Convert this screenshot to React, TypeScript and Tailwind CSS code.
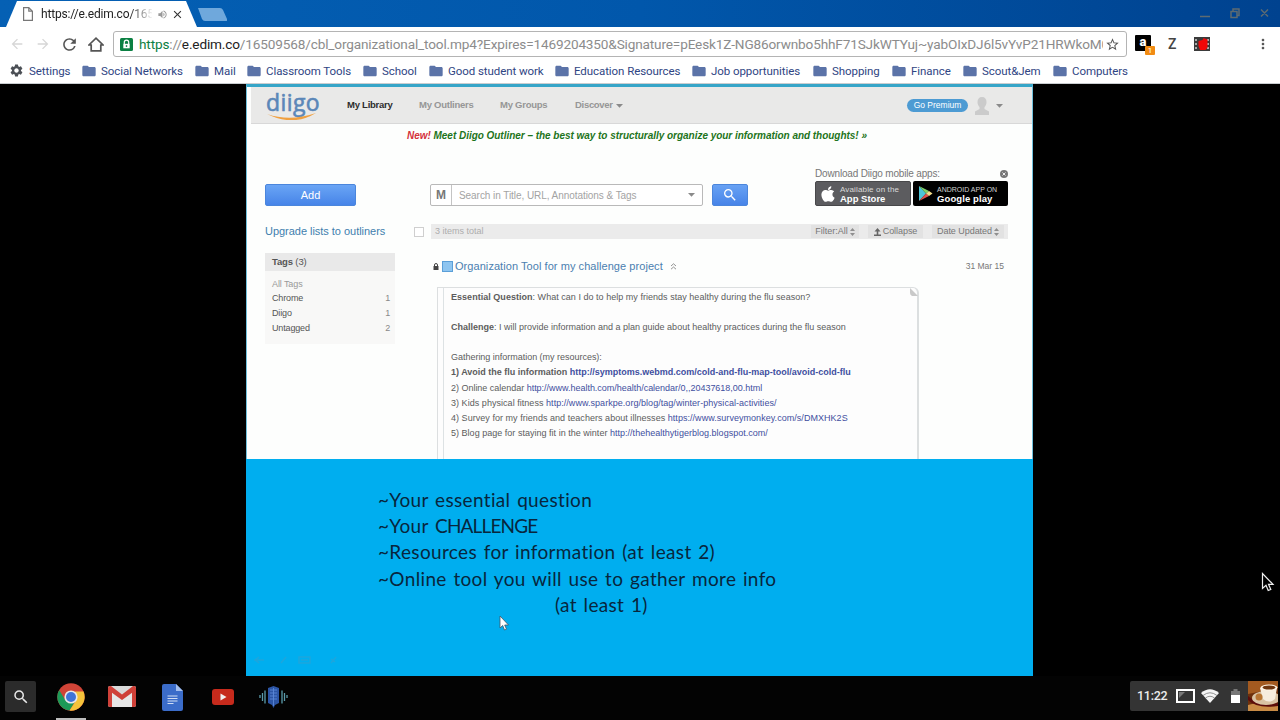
import type { ReactNode } from "react";
import {
  MdArrowBack,
  MdArrowForward,
  MdRefresh,
  MdFolder,
  MdSettings,
  MdStarBorder,
  MdMoreVert,
  MdSearch,
  MdVolumeUp,
  MdClose,
} from "react-icons/md";
import { FaApple } from "react-icons/fa";

const bookmarks = [
  { label: "Social Networks", width: "w-[113px]" },
  { label: "Mail", width: "w-[52px]" },
  { label: "Classroom Tools", width: "w-[116px]" },
  { label: "School", width: "w-[66px]" },
  { label: "Good student work", width: "w-[126px]" },
  { label: "Education Resources", width: "w-[137px]" },
  { label: "Job opportunities", width: "w-[121px]" },
  { label: "Shopping", width: "w-[79px]" },
  { label: "Finance", width: "w-[71px]" },
  { label: "Scout&Jem", width: "w-[90px]" },
  { label: "Computers", width: "w-[80px]" },
];

function TitleBar() {
  return (
    <div className="flex h-[27px] bg-linear-to-r from-[#0560b4] via-[#0157ab] to-[#00428f]">
      <div className="ml-[6px] mt-px flex h-[26px] w-[191px] items-center bg-white pl-[17px] [clip-path:polygon(11px_0,180px_0,191px_100%,0_100%)]">
        <svg width="10" height="14" viewBox="0 0 10 14" fill="none" stroke="#777" strokeWidth="1.2">
          <path d="M.6.6h5.200L9.400 4.200v9.200H.6zM5.800.6v3.600h3.600" />
        </svg>
        <span className="ml-2 w-[111px] overflow-hidden text-[12px] tracking-[-0.17px] text-[#222] [mask-image:linear-gradient(to_right,black_80%,transparent_101%)]">
          https://e.edim.co/165
        </span>
        <MdVolumeUp className="ml-[5px] size-[11px] text-[#999]" />
        <MdClose className="ml-[3px] size-[13px] text-[#333]" />
      </div>
      <svg className="mt-2" width="30" height="14" viewBox="0 0 30 14">
        <path d="M1 0h22q2 0 3 2l4 9q1 2-1 2H8q-2 0-3-2z" fill="#6fa8dc" />
      </svg>
      <svg className="ml-auto mr-[10px] mt-[7px]" width="70" height="13" viewBox="0 0 70 13" fill="none" stroke="#5d6b72" strokeWidth="1.5">
        <path d="M0 9.500h10M31 4.500h6v6h-6zM33 4V2h6v6.500h-2M61 2.500l7 7M68 2.500l-7 7" />
      </svg>
    </div>
  );
}

function Toolbar() {
  return (
    <div className="flex h-[33px] items-center bg-white pt-px">
      <MdArrowBack className="ml-[9px] size-4 text-[#d6d6d6]" />
      <MdArrowForward className="ml-[10px] size-4 text-[#d6d6d6]" />
      <MdRefresh className="ml-[9px] size-[19px] text-[#555]" />
      <svg className="ml-[9px]" width="16" height="15" viewBox="0 0 16 15" fill="none" stroke="#555" strokeWidth="1.7">
        <path d="M.9 8 8 1.200 15.100 8H12.800v5.800H3.200V8z" />
      </svg>
      <div className="ml-[9px] flex h-[26px] w-[1014px] items-center rounded-[3px] border border-[#b4b4b4]">
        <svg className="ml-[6px] shrink-0" width="13" height="13" viewBox="0 0 13 13">
          <rect width="13" height="13" rx="1.500" fill="#0b8043" />
          <path d="M4.300 6V4.300a2.200 2.200 0 0 1 4.400 0V6" fill="none" stroke="#fff" strokeWidth="1.200" />
          <path d="M3.300 5.800h6.400v4.500H3.300z" fill="#fff" />
          <path d="M5.800 7.200h1.400v1.700H5.800z" fill="#0b8043" />
        </svg>
        <div className="ml-[6px] w-[964px] overflow-hidden whitespace-nowrap text-[13.6px] leading-[20px] tracking-[-0.15px] text-[#8c8c8c]">
          <span className="text-[#0b8043]">https</span>://<span className="text-[#222]">e.edim.co</span>
          /16509568/cbl_organizational_tool.mp4?Expires=1469204350&amp;Signature=pEesk1Z-NG86orwnbo5hhF71SJkWTYuj~yabOIxDJ6l5vYvP21HRWkoM0
        </div>
        <MdStarBorder className="ml-[2px] size-[15px] shrink-0 text-[#555]" />
      </div>
      <div className="relative ml-[8px] mb-[2px] flex size-[16px] justify-center rounded-[1px] bg-black text-[13px] font-black leading-[14px] text-white">
        a
        <span className="absolute left-[10px] top-[11px] flex h-[9px] w-[10px] items-center justify-center rounded-[1px] bg-[#f28c13] text-[8px] font-normal leading-none text-white">
          1
        </span>
      </div>
      <span className="ml-[17px] w-[10px] text-[14px] font-medium text-[#444]">Z</span>
      <svg className="ml-[16px]" width="16" height="16" viewBox="0 0 16 16">
        <path d="M0 1h16v14H0z" fill="#3b3b3b" />
        <path d="M1 3h2v2H1zM1 7h2v2H1zM1 11h2v2H1zM13 3h2v2h-2zM13 7h2v2h-2zM13 11h2v2h-2z" fill="#aaa" />
        <path d="M4.500 5l4-1 1-2 4 1.500v8l-2 2.500H6l-1.500-4z" fill="#f00808" />
      </svg>
      <MdMoreVert className="ml-[45px] size-4 text-[#555]" />
    </div>
  );
}

function Bookmarks() {
  return (
    <div className="flex h-[23px] items-center bg-white pb-px pl-[9px] text-[11.5px] leading-[16px] tracking-[-0.07px] text-[#2f4583]">
      <MdSettings className="mb-px size-[15px] shrink-0 text-[#4c5056]" />
      <span className="ml-[5px] w-[52px]">Settings</span>
      {bookmarks.map((b) => (
        <div key={b.label} className={`flex shrink-0 items-center whitespace-nowrap ${b.width}`}>
          <MdFolder className="mb-px mr-[4px] size-4 shrink-0 text-[#5b73a8]" />
          {b.label}
        </div>
      ))}
    </div>
  );
}

function Caret({ className }: { className: string }) {
  return (
    <svg className={className} width="7" height="4" viewBox="0 0 7 4">
      <path d="M0 0h7L3.500 3.800z" fill="#8a8a8a" />
    </svg>
  );
}

function Sorter() {
  return (
    <svg width="5" height="8" viewBox="0 0 5 8" className="ml-[2px]">
      <path d="M0 3 2.500 0 5 3zM0 5h5L2.500 8z" fill="#8f8f8f" />
    </svg>
  );
}

function DiigoNav() {
  return (
    <div className="ml-[4px] flex h-[37px] items-center border-b border-[#d8d8d8] bg-[#e9e9e8] pt-px text-[9.5px] font-bold text-[#969696]">
      <div className="ml-[15px] h-[30px] w-[54px]">
        <div className="h-[23px] font-['Open_Sans'] text-[23px] font-normal leading-[23px] tracking-[0.4px] text-[#5b87b8] [-webkit-text-stroke:0.6px_#5b87b8]">diigo</div>
        <svg width="52" height="7" viewBox="0 0 52 7" className="-mt-px">
          <path d="M1 1Q24 9 50 0Q27 14 1 1z" fill="#f0a040" />
        </svg>
      </div>
      <span className="ml-[27px] w-[72px] tracking-[-0.25px] text-[#2d2d2d]">My Library</span>
      <span className="w-[81px] tracking-[-0.25px]">My Outliners</span>
      <span className="w-[75px] tracking-[-0.25px]">My Groups</span>
      <span className="w-[41px] tracking-[-0.3px]">Discover</span>
      <Caret className="" />
      <span className="ml-[284px] flex h-[13px] w-[61px] items-center justify-center rounded-full bg-[#4d9bd3] text-[8.5px] font-normal text-white">
        Go Premium
      </span>
      <svg className="ml-[6px]" width="16" height="20" viewBox="0 0 16 20" fill="#cbcbcb">
        <path d="M8 1c3 0 4.500 2 4.500 5 0 2.500-1 4-2 5v2l4.500 2.500V19H1v-3.500L5.500 13v-2c-1-1-2-2.500-2-5C3.500 3 5 1 8 1z" />
      </svg>
      <Caret className="ml-[6px]" />
    </div>
  );
}

function SearchRow() {
  return (
    <div className="flex h-[39px] items-end pl-[18px]">
      <div className="flex h-[22px] w-[91px] items-center justify-center rounded-[2px] border border-[#4b86dc] bg-linear-to-b from-[#6aa5f5] to-[#4784e8] text-[11px] text-white">
        Add
      </div>
      <div className="ml-[74px] flex h-[22px] w-[273px] items-center rounded-[2px] border border-[#b9b9b9] bg-white">
        <span className="flex h-full w-[21px] items-center justify-center border-r border-[#c4c4c4] text-[12px] font-bold text-[#777]">M</span>
        <span className="ml-[7px] w-[229px] text-[10px] tracking-[-0.06px] text-[#a3a3a3]">Search in Title, URL, Annotations &amp; Tags</span>
        <Caret className="" />
      </div>
      <div className="ml-[9px] flex h-[22px] w-[36px] items-center justify-center rounded-[2px] border border-[#4b86dc] bg-linear-to-b from-[#68a2f4] to-[#4784e8]">
        <MdSearch className="size-[16px] text-white" />
      </div>
      <div className="ml-[67px] w-[193px]">
        <div className="mb-px flex h-[12px] items-center justify-between text-[10px] leading-[12px] tracking-[-0.17px] text-[#777]">
          Download Diigo mobile apps:
          <svg width="8" height="8" viewBox="0 0 8 8">
            <circle cx="4" cy="4" r="4" fill="#777" />
            <path d="M2.500 2.500l3 3M5.500 2.500l-3 3" stroke="#eee" />
          </svg>
        </div>
        <div className="flex gap-[2px] text-white">
          <div className="flex h-[25px] w-[96px] items-center rounded-[2px] border border-[#48484a] bg-[#5c5c5f] pl-[3px]">
            <FaApple className="size-[18px]" />
            <div className="ml-[3px] leading-[9px]">
              <div className="text-[8px] tracking-[0.15px] text-[#d9d9d9]">Available on the</div>
              <div className="text-[9.5px] font-bold">App Store</div>
            </div>
          </div>
          <div className="flex h-[25px] w-[95px] items-center rounded-[2px] bg-black pl-[5px]">
            <svg width="15" height="17" viewBox="0 0 15 17">
              <path d="M1 1v15l7-7.500z" fill="#4ec5d8" />
              <path d="M1 1l7 7.500 3-2.500z" fill="#7fd06a" />
              <path d="M1 16l7-7.500 3 2.500z" fill="#e0524b" />
              <path d="M8 8.500L11 6l3.500 2.500L11 11z" fill="#f2dc8a" />
            </svg>
            <div className="ml-[4px] leading-[9px]">
              <div className="text-[7px] text-[#d0d0d0]">ANDROID APP ON</div>
              <div className="text-[9.5px] font-bold tracking-[0.1px]">Google play</div>
            </div>
          </div>
        </div>
      </div>
    </div>
  );
}

function Sidebar() {
  const tags = [
    ["Chrome", "1"],
    ["Diigo", "1"],
    ["Untagged", "2"],
  ];
  return (
    <div className="ml-[18px] w-[130px] shrink-0">
      <div className="h-[15px] whitespace-nowrap text-[11px] leading-[15px] tracking-[-0.03px] text-[#3f7fae]">Upgrade lists to outliners</div>
      <div className="mt-[14px] h-[91px] bg-[#f8f8f7] text-[9px] text-[#555]">
        <div className="h-[18px] bg-[#e9e9e9] pl-[7px] text-[9.5px] leading-[18px] tracking-[-0.15px]">
          <b>Tags</b> (3)
        </div>
        <div className="mt-[6px] h-[14px] pl-[7px] leading-[14px] tracking-[-0.1px] text-[#999]">All Tags</div>
        {tags.map(([name, count]) => (
          <div key={name} className="flex h-[15px] justify-between pl-[7px] pr-[5px] leading-[15px] tracking-[-0.15px]">
            <span>{name}</span>
            <span className="text-[#888]">{count}</span>
          </div>
        ))}
      </div>
    </div>
  );
}

function Line({ children, className = "" }: { children?: ReactNode; className?: string }) {
  return <div className={`h-[15.1px] leading-[15px] ${className}`}>{children}</div>;
}

function Link({ children }: { children: ReactNode }) {
  return <span className="text-[#3f4fa0]">{children}</span>;
}

function Library() {
  return (
    <div className="ml-[19px] w-[594px]">
      <div className="flex h-[15px] items-center">
        <span className="size-[10px] border border-[#cfcfcf] bg-white" />
        <div className="ml-[7px] flex h-[15px] flex-1 items-center bg-[#ebebeb] text-[9px] text-[#777]">
          <span className="ml-[4px] w-[376px] text-[#adadad]">3 items total</span>
          <span className="flex h-[13px] w-[48px] items-center justify-center bg-[#e2e2e2]">Filter:All<Sorter /></span>
          <span className="ml-[9px] flex h-[13px] w-[55px] items-center justify-center bg-[#e2e2e2] tracking-[-0.05px]">
            <svg width="7" height="8" viewBox="0 0 7 8" className="mr-[2px]">
              <path d="M3.500 0 6.500 3.500H4.300V6.500H7V8H0V6.500h2.700v-3H.5z" fill="#666" />
            </svg>
            Collapse
          </span>
          <span className="ml-[9px] flex h-[13px] w-[72px] items-center justify-center bg-[#e2e2e2] tracking-[-0.05px]">Date Updated<Sorter /></span>
        </div>
      </div>
      <div className="mt-[19px] flex h-[16px] items-center pl-[19px]">
        <svg width="6" height="7" viewBox="0 0 6 7">
          <path d="M1.500 3V2a1.500 1.500 0 0 1 3 0v1" fill="none" stroke="#444" />
          <path d="M.5 3h5v4h-5z" fill="#444" />
        </svg>
        <span className="ml-[3px] size-[11px] border border-[#5b9fd8] bg-[#8ec5f0]" />
        <span className="ml-[2px] w-[216px] text-[11px] tracking-[0.06px] text-[#4b7fb0]">Organization Tool for my challenge project</span>
        <svg width="5" height="7" viewBox="0 0 5 7" fill="none" stroke="#777" strokeWidth=".8">
          <path d="M0 3 2.500.8 5 3M0 6.200 2.500 4 5 6.200" />
        </svg>
        <span className="ml-auto mr-[4px] pt-px text-[8.5px] text-[#777]">31 Mar 15</span>
      </div>
      <div className="relative ml-[23px] mt-[13px] h-[172px] w-[482px] rounded-tr-[6px] border-l border-r-2 border-t border-[#dcdfe0] bg-[#fdfdfd]">
        <svg className="absolute -right-px top-0" width="8" height="8" viewBox="0 0 8 8">
          <path d="M0 0l8 8H2Q0 7 0 5z" fill="#c9c9c9" />
        </svg>
        <div className="ml-[5px] h-full border-l border-[#dde2e4] pl-[7px] pt-[2px] text-[9px] text-[#5c5c5c]">
          <Line className="tracking-[0.03px]"><b>Essential Question</b>: What can I do to help my friends stay healthy during the flu season?</Line>
          <Line />
          <Line><b>Challenge</b>: I will provide information and a plan guide about healthy practices during the flu season</Line>
          <Line />
          <Line className="tracking-[-0.02px]">Gathering information (my resources):</Line>
          <Line className="font-bold">1) Avoid the flu information <Link>http://symptoms.webmd.com/cold-and-flu-map-tool/avoid-cold-flu</Link></Line>
          <Line className="tracking-[-0.02px]">2) Online calendar <Link>http://www.health.com/health/calendar/0,,20437618,00.html</Link></Line>
          <Line className="tracking-[0.04px]">3) Kids physical fitness <Link>http://www.sparkpe.org/blog/tag/winter-physical-activities/</Link></Line>
          <Line className="tracking-[0.04px]">4) Survey for my friends and teachers about illnesses <Link>https://www.surveymonkey.com/s/DMXHK2S</Link></Line>
          <Line className="tracking-[0.02px]">5) Blog page for staying fit in the winter <Link>http://thehealthytigerblog.blogspot.com/</Link></Line>
        </div>
      </div>
    </div>
  );
}

function Slide() {
  return (
    <div className="relative ml-[246px] h-[592px] w-[787px] overflow-hidden bg-[#00aeef]">
      <div className="h-[375px] whitespace-nowrap border-x border-t-[3px] border-[#36a5c8] border-x-[#6fc0dc] bg-[#fdfefd] font-['Liberation_Sans',sans-serif]">
        <DiigoNav />
        <div className="ml-[160px] mt-[3px] h-[17px] text-[10px] font-bold italic leading-[17px] tracking-[-0.03px] text-[#1d7420]">
          <span className="text-[#d4323c]">New!</span> Meet Diigo Outliner – the best way to structurally organize your information and thoughts! »
        </div>
        <div className="mt-[23px]"><SearchRow /></div>
        <div className="mt-[18px] flex">
          <Sidebar />
          <Library />
        </div>
      </div>
      <div className="ml-[132px] mt-[28px] whitespace-nowrap font-[Lato,sans-serif] text-[19px] leading-[26.2px] tracking-[0.34px] text-[#08263d] [word-spacing:1.5px]">
        <div>~Your essential question</div>
        <div>~Your <span className="tracking-[-0.85px]">CHALLENGE</span></div>
        <div>~Resources for information (at least 2)</div>
        <div>~Online tool you will use to gather more info</div>
        <div className="ml-[177px]">(at least 1)</div>
      </div>
      <svg className="absolute left-[253px] top-[531px]" width="11" height="16" viewBox="0 0 11 16">
        <path d="M1 1v12l2.700-2.500L5.500 15l2-.8-1.800-4.200h3.800z" fill="#fff" stroke="#456" strokeWidth=".8" />
      </svg>
      <svg className="absolute left-[8px] top-[571px] opacity-50" width="86" height="10" viewBox="0 0 86 10" stroke="#3a9ecb" strokeWidth="1.5" fill="none">
        <path d="M10 5H1l4-3M1 5l4 3M27 8l5-6M45 2h11v6H45zM47 5h7M77 8l5-6M77 4l4 3" />
      </svg>
    </div>
  );
}

function Shelf() {
  return (
    <div className="flex h-[44px] items-center bg-[#030303]">
      <div className="mb-[3px] ml-[5px] flex size-[31px] items-center justify-center rounded-[2px] bg-[#2b2b2b]">
        <MdSearch className="size-[18px] text-[#e8e8e8]" />
      </div>
      <div className="ml-[20px] flex h-[44px] w-[30px] flex-col items-center justify-between pt-[7px]">
        <svg width="28" height="28" viewBox="0 0 28 28">
          <circle cx="14" cy="14" r="13.7" fill="#d04437" />
          <path d="M2.200 7A13.700 13.700 0 0 0 12.500 27.600L19 17 14 14 8.200 17z" fill="#1c9a58" />
          <path d="M26.500 8.500A13.700 13.700 0 0 1 12.500 27.600L19.700 16.500 18 8.500z" fill="#f5c33b" />
          <circle cx="14" cy="14" r="6.6" fill="#e8e8e8" />
          <circle cx="14" cy="14" r="5" fill="#3f74d8" />
        </svg>
        <span className="h-[2px] w-[30px] bg-[#bdbdbd]" />
      </div>
      <svg className="mb-[3px] ml-[22px]" width="28" height="21" viewBox="0 0 28 21">
        <rect width="28" height="21" rx="2" fill="#d9d9d9" />
        <path d="M4 21V7l10 7 10-7v14z" fill="#e6e6e6" />
        <path d="M0 2Q0 0 2 0h1l11 8.500L25 0h1q2 0 2 2v17q0 2-2 2h-2V6.800L14 14 4 6.800V21H2q-2 0-2-2z" fill="#cf4038" />
      </svg>
      <svg className="mb-[2px] ml-[26px]" width="21" height="27" viewBox="0 0 21 27">
        <path d="M2 0h12l7 7v18q0 2-2 2H2q-2 0-2-2V2Q0 0 2 0z" fill="#3b6cc9" />
        <path d="M14 0l7 7h-7z" fill="#a4bfee" />
        <path d="M5.500 12h10M5.500 14.500h10M5.500 17h10M5.500 19.500h6" stroke="#d2ddf3" strokeWidth="1.2" />
      </svg>
      <svg className="mb-[3px] ml-[29px]" width="22" height="16" viewBox="0 0 22 16">
        <rect width="22" height="16" rx="3" fill="#c62a1c" />
        <path d="M8.500 4.500v7l6-3.500z" fill="#f0f0f0" />
      </svg>
      <svg className="mb-[3px] ml-[25px]" width="29" height="22" viewBox="0 0 29 22">
        <path d="M1 9v3M3.500 7v8M6 4.500v13M23 4.500v13M25.500 7v8M28 9v3" stroke="#5a9cab" strokeWidth="1.3" />
        <path d="M9 2l5.500-2L20 2v15l-4 2-1.500 3-1.500-3-4-2z" fill="#2c55a5" />
        <path d="M11 4h7M11 7h7M11 10h7M11 13h7M14.500 2v18" stroke="#5a87d6" strokeWidth=".9" />
      </svg>
      <div className="mb-[4px] ml-auto mr-[2px] flex h-[30px] items-center rounded-l-[2px] bg-[#343434]">
        <span className="ml-[7px] w-[39px] text-[12.5px] font-medium tracking-[-0.25px] text-[#ececec]">11:22</span>
        <svg width="19" height="14" viewBox="0 0 19 14">
          <path d="M1 1h17v12H1z" fill="none" stroke="#fff" strokeWidth="2" />
          <path d="M3 3h6L3 9z" fill="#777" />
        </svg>
        <svg className="ml-[6px]" width="18" height="14" viewBox="0 0 18 14">
          <path d="M0 4Q9-3.500 18 4L9 14z" fill="#f4f4f4" />
          <path d="M2 6.500Q9 1 16 6.500M4.500 9Q9 5.500 13.500 9" fill="none" stroke="#777" strokeWidth=".8" />
        </svg>
        <svg className="ml-[12px] mr-[8px]" width="9" height="14" viewBox="0 0 9 14">
          <path d="M0 2h2.500V0h4v2H9v12H0z" fill="#777" />
          <path d="M0 6h9v8H0z" fill="#fff" />
        </svg>
        <svg width="30" height="30" viewBox="0 0 30 30">
          <path d="M0 0h30v30H0z" fill="#6d300c" />
          <path d="M0 0h30v7L0 13z" fill="#a35a20" />
          <path d="M0 24q14-5 30 0v6H0z" fill="#c98b45" />
          <path d="M0 15q10 10 30 7v3Q9 28 0 19z" fill="#5c0d0a" />
          <ellipse cx="18" cy="17" rx="14" ry="7" fill="#d9c3a4" />
          <path d="M12 7q9-4 17 0l-2 11q-6 5-12 0z" fill="#f6eddf" />
          <ellipse cx="21" cy="6.5" rx="8.5" ry="3" fill="#fff5e5" />
          <ellipse cx="21" cy="6.5" rx="6.5" ry="2" fill="#70360e" />
          <circle cx="11" cy="16" r="3.5" fill="#b87533" />
        </svg>
      </div>
    </div>
  );
}

export default function App() {
  return (
    <div className="relative h-[720px] w-[1280px] overflow-hidden bg-black font-[Roboto,sans-serif]">
      <TitleBar />
      <Toolbar />
      <Bookmarks />
      <div className="h-px bg-[#c9cdd0]" />
      <Slide />
      <Shelf />
      <svg className="absolute left-[1261px] top-[572px]" width="14" height="20" viewBox="0 0 14 20">
        <path d="M1.500 1.500v15l3.500-3.200 2.200 5.200 2.600-1-2.300-5.200h4.500z" fill="#000" stroke="#eee" strokeWidth="1.2" />
      </svg>
    </div>
  );
}
